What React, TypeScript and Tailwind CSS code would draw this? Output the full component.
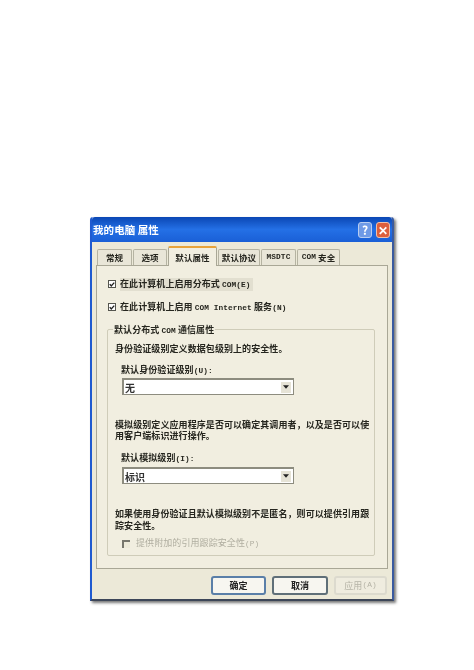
const font = { fontFamily: '"Noto Sans CJK SC", "Liberation Sans", sans-serif' };

function L({ children }: { children: string }) {
  return <span className="font-['Liberation_Mono'] text-[7.8px] font-bold">{children}</span>;
}

function Tab({ children, w, active }: { children: React.ReactNode; w: string; active?: boolean }) {
  return (
    <div
      className={
        active
          ? `${w} relative z-10 -mb-px flex h-[20px] items-center justify-center rounded-t-[2px] border border-b-0 border-[#a9a796] border-t-[#e8a33a] border-t-2 bg-[#f1eee0]`
          : `${w} flex h-[16px] items-center justify-center rounded-t-[2px] border border-b-0 border-[#b5b3a2] bg-[#e9e6d8]`
      }
    >
      {children}
    </div>
  );
}

function Check({ checked, disabled }: { checked?: boolean; disabled?: boolean }) {
  return (
    <span
      className={
        disabled
          ? "h-[8px] w-[8px] shrink-0 border-l-2 border-t-2 border-[#77766c] bg-[#ece9d8]"
          : "flex h-[8px] w-[8px] shrink-0 items-center justify-center border border-[#55554e] bg-white"
      }
    >
      {checked && (
        <svg viewBox="0 0 8 8" className="h-[7px] w-[7px]">
          <path d="M1 3.5 L3 6 L7 1.5" fill="none" stroke="#222" strokeWidth="1.8" />
        </svg>
      )}
    </span>
  );
}

function Select({ value }: { value: string }) {
  return (
    <div className="ml-[7px] flex h-[17px] w-[172px] items-center justify-between border border-[#8d8c7f] border-t-2 border-l-2 bg-white pl-[1px] pr-[2px] text-[10px] text-[#333]">
      <span>{value}</span>
      <span className="flex h-[11px] w-[10px] items-center justify-center bg-[#e6e3d6]">
        <svg viewBox="0 0 7 4" className="h-[4px] w-[6px]">
          <path d="M0 0 H7 L3.5 4 Z" fill="#222" />
        </svg>
      </span>
    </div>
  );
}

function Btn({ children, w, ring, disabled }: { children: React.ReactNode; w: string; ring: string; disabled?: boolean }) {
  return (
    <div
      className={`${w} flex h-[19px] items-center justify-center rounded-[3px] border-2 ${ring} ${
        disabled ? "bg-[#efecdf] font-normal text-[#b5b3a6]" : "bg-[#f7f6f0] text-[#222]"
      }`}
    >
      {children}
    </div>
  );
}

export default function App() {
  return (
    <div className="h-[670px] w-[474px] overflow-hidden bg-white pl-[90px] pt-[217px]" style={font}>
      <div className="h-[384px] w-[304px] rounded-t-[3px] border-b-2 border-l-2 border-r-2 border-b-[#3d4658] border-l-[#1f5ad0] border-r-[#3a5aa0] text-[9px] font-semibold leading-[11px] tracking-[0.08px] text-[#26261f] shadow-[2px_2px_3px_#777] blur-[0.7px]">
        <div className="flex h-[25px] items-center justify-between rounded-t-[3px] bg-gradient-to-b from-[#0b47b4] via-[#2470e6] to-[#1a5fd6] pl-[1px] pr-[2px]">
          <span className="text-[10.5px] font-bold text-white">我的电脑 属性</span>
          <div className="flex gap-[4px]">
            <div className="flex h-[16px] w-[14px] items-center justify-center rounded-[3px] border border-[#b9cdf0] bg-[#6f9ae6] text-[12px] font-bold text-white">?</div>
            <div className="flex h-[16px] w-[14px] items-center justify-center rounded-[3px] border border-[#f0c0a8] bg-[#dd5f3c] text-[12px] font-bold text-white">✕</div>
          </div>
        </div>

        <div className="h-[357px] bg-[#ece9d8] pl-[4px] pr-[4px] pt-[3px]">
          <div className="flex h-[20px] items-end gap-[1px] pl-[1px] text-[8.5px]">
            <Tab w="w-[35px]">常规</Tab>
            <Tab w="w-[34px]">选项</Tab>
            <Tab w="w-[49px]" active>默认属性</Tab>
            <Tab w="w-[42px]">默认协议</Tab>
            <Tab w="w-[35px]"><L>MSDTC</L></Tab>
            <Tab w="w-[43px]"><L>COM</L>&nbsp;安全</Tab>
          </div>

          <div className="h-[304px] border border-[#a9a796] bg-[#f1eee0] px-[10px] pt-[11px]">
            <div className="ml-[1px] flex h-[14px] items-center gap-[4px]">
              <Check checked />
              <span className="bg-[#e2dfd0] pr-[2px]">在此计算机上启用分布式 <L>COM(E)</L></span>
            </div>
            <div className="ml-[1px] mt-[9px] flex h-[14px] items-center gap-[4px]">
              <Check checked />
              <span>在此计算机上启用 <L>COM Internet</L> 服务<L>(N)</L></span>
            </div>

            <div className="relative mt-[15px] h-[227px] w-[268px] rounded-[2px] border border-[#cfccb9] pl-[7px] pr-[4px] pt-[13px]">
              <span className="absolute -top-[6px] left-[5px] bg-[#f1eee0] px-[1px]">默认分布式 <L>COM</L> 通信属性</span>
              <p>身份验证级别定义数据包级别上的安全性。</p>
              <p className="ml-[6px] mt-[10px]">默认身份验证级别<L>(U):</L></p>
              <div className="mt-[1px]"><Select value="无" /></div>
              <p className="mt-[24px]">模拟级别定义应用程序是否可以确定其调用者，以及是否可以使用客户端标识进行操作。</p>
              <p className="ml-[6px] mt-[11px]">默认模拟级别<L>(I):</L></p>
              <div className="mt-[2px]"><Select value="标识" /></div>
              <p className="mt-[24px] leading-[12px]">如果使用身份验证且默认模拟级别不是匿名，则可以提供引用跟踪安全性。</p>
              <div className="ml-[7px] mt-[5px] flex items-center gap-[6px] font-normal text-[#b0aea0]">
                <Check disabled />
                <span>提供附加的引用跟踪安全性<span className="font-['Liberation_Mono'] text-[7.8px]">(P)</span></span>
              </div>
            </div>
          </div>

          <div className="mt-[7px] flex justify-end gap-[6px] pr-[1px]">
            <Btn w="w-[55px]" ring="border-[#5a7fa8]">确定</Btn>
            <Btn w="w-[56px]" ring="border-[#5f6f78]">取消</Btn>
            <Btn w="w-[53px]" ring="border-[#dcdace]" disabled>应用<span className="font-['Liberation_Mono'] text-[7.8px]">(A)</span></Btn>
          </div>
        </div>
      </div>
    </div>
  );
}
